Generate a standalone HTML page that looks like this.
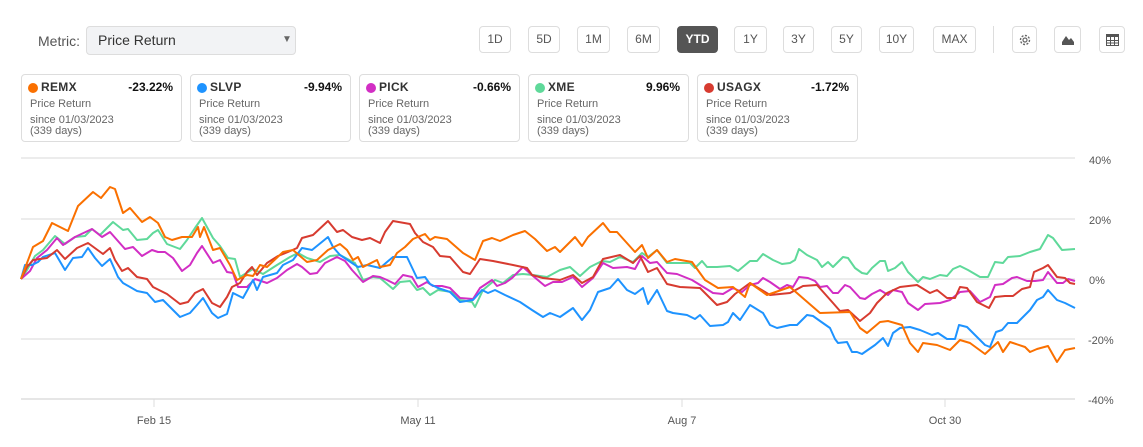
<!DOCTYPE html>
<html><head><meta charset="utf-8"><style>
body{margin:0;width:1143px;height:447px;background:#fff;font-family:"Liberation Sans",Arial,sans-serif;position:relative;overflow:hidden}
.a{position:absolute}
.btn{position:absolute;top:26px;height:25px;border:1px solid #ddd;border-radius:4px;font-size:12px;color:#555;text-align:center;line-height:25px;box-sizing:content-box;background:#fff}
.card{position:absolute;top:74px;width:159px;height:66px;border:1px solid #ddd;border-radius:4px}
.card .dot{position:absolute;left:6px;top:8px;width:10px;height:10px;border-radius:50%}
.card .n{position:absolute;left:19px;top:5px;font-size:12px;font-weight:bold;color:#333;letter-spacing:.3px}
.card .v{position:absolute;right:8px;top:5px;font-size:12px;font-weight:bold;color:#111}
.card .s{position:absolute;left:8px;font-size:11px;color:#666;line-height:12px}
</style></head><body>
<div class="a" style="left:38px;top:33px;font-size:14px;color:#555">Metric:</div>
<div class="a" style="left:86px;top:26px;width:208px;height:27px;background:#f2f3f5;border:1px solid #ddd;border-radius:4px"></div>
<div class="a" style="left:98px;top:32px;font-size:14px;color:#333">Price Return</div>
<div class="a" style="left:282px;top:34px;font-size:10px;color:#666">▼</div>

<div class="btn" style="left:479px;width:30px">1D</div>
<div class="btn" style="left:528px;width:30px">5D</div>
<div class="btn" style="left:577px;width:31px">1M</div>
<div class="btn" style="left:627px;width:31px">6M</div>
<div class="btn" style="left:677px;width:39px;background:#555;border-color:#555;color:#fff;font-weight:bold">YTD</div>
<div class="btn" style="left:734px;width:31px">1Y</div>
<div class="btn" style="left:783px;width:29px">3Y</div>
<div class="btn" style="left:831px;width:29px">5Y</div>
<div class="btn" style="left:879px;width:33px">10Y</div>
<div class="btn" style="left:933px;width:41px">MAX</div>
<div class="a" style="left:993px;top:26px;width:1px;height:27px;background:#ddd"></div>
<div class="btn" style="left:1012px;width:23px"><svg width="14" height="14" viewBox="0 0 14 14" style="margin-top:6px"><circle cx="7" cy="7" r="4.5" fill="none" stroke="#666" stroke-width="1.4" stroke-dasharray="2 1.5"/><circle cx="7" cy="7" r="2" fill="none" stroke="#666" stroke-width="1.2"/></svg></div>
<div class="btn" style="left:1054px;width:25px"><svg width="14" height="12" viewBox="0 0 14 12" style="margin-top:7px"><path d="M1 11 L1 8 L5 2 L8 6 L10 4 L13 8 L13 11Z" fill="#555"/></svg></div>
<div class="btn" style="left:1099px;width:24px"><svg width="13" height="12" viewBox="0 0 13 12" style="margin-top:7px"><rect x="0.5" y="0.5" width="12" height="11" fill="none" stroke="#555"/><rect x="0" y="0" width="13" height="3" fill="#555"/><path d="M4.5 3V12M8.5 3V12M0 6.5H13M0 9H13" stroke="#555" stroke-width="1"/></svg></div>

<div class="card" style="left:21px"><div class="dot" style="background:#fa7000"></div><div class="n">REMX</div><div class="v">-23.22%</div><div class="s" style="top:23px">Price Return</div><div class="s" style="top:39px">since 01/03/2023</div><div class="s" style="top:50px">(339 days)</div></div>
<div class="card" style="left:190px"><div class="dot" style="background:#1e93ff"></div><div class="n">SLVP</div><div class="v">-9.94%</div><div class="s" style="top:23px">Price Return</div><div class="s" style="top:39px">since 01/03/2023</div><div class="s" style="top:50px">(339 days)</div></div>
<div class="card" style="left:359px"><div class="dot" style="background:#d22ec4"></div><div class="n">PICK</div><div class="v">-0.66%</div><div class="s" style="top:23px">Price Return</div><div class="s" style="top:39px">since 01/03/2023</div><div class="s" style="top:50px">(339 days)</div></div>
<div class="card" style="left:528px"><div class="dot" style="background:#5fd99a"></div><div class="n">XME</div><div class="v">9.96%</div><div class="s" style="top:23px">Price Return</div><div class="s" style="top:39px">since 01/03/2023</div><div class="s" style="top:50px">(339 days)</div></div>
<div class="card" style="left:697px"><div class="dot" style="background:#d73b30"></div><div class="n">USAGX</div><div class="v">-1.72%</div><div class="s" style="top:23px">Price Return</div><div class="s" style="top:39px">since 01/03/2023</div><div class="s" style="top:50px">(339 days)</div></div>

<svg class="a" style="left:0;top:0" width="1143" height="447">
<g stroke="#e6e6e6" stroke-width="1.5"><line x1="21" x2="1075" y1="158" y2="158"/><line x1="21" x2="1075" y1="219" y2="219"/><line x1="21" x2="1075" y1="279" y2="279"/><line x1="21" x2="1075" y1="339" y2="339"/></g>
<line x1="21" x2="1075" y1="399" y2="399" stroke="#ddd" stroke-width="1.5"/>
<g stroke="#ddd"><line x1="154" x2="154" y1="399" y2="407"/><line x1="418" x2="418" y1="399" y2="407"/><line x1="682" x2="682" y1="399" y2="407"/><line x1="945" x2="945" y1="399" y2="407"/></g>
<g font-size="11" fill="#555" font-family="Liberation Sans,Arial,sans-serif"><text x="1089" y="164">40%</text><text x="1089" y="224">20%</text><text x="1089" y="284">0%</text><text x="1088" y="344">-20%</text><text x="1088" y="404">-40%</text>
<text x="154" y="424" text-anchor="middle">Feb 15</text><text x="418" y="424" text-anchor="middle">May 11</text><text x="682" y="424" text-anchor="middle">Aug 7</text><text x="945" y="424" text-anchor="middle">Oct 30</text></g>
<g fill="none" stroke-width="2" stroke-linejoin="round">
<polyline stroke="#5fd99a" points="21,279 27,270 35,256 43,250 55,236 65,244 75,237 85,236 92,229 100,235 113,222 123,230 128,229 137,240 147,239 153,233 158,230 167,244 180,249 187,240 195,228 202,218 213,238 220,246 228,258 235,259 240,277 253,269 263,274 277,265 290,257 298,253 307,258 320,262 330,256 340,255 355,263 363,280 373,277 380,278 393,289 400,282 410,281 417,290 423,288 430,295 438,290 452,292 460,300 472,302 475,307 483,290 495,280 503,283 513,275 523,274 533,275 547,277 560,270 570,267 580,276 590,267 602,261 610,262 620,257 633,262 642,253 648,257 657,250 667,263 690,263 695,268 702,261 707,267 717,267 730,266 738,271 750,261 757,261 763,254 773,260 782,264 790,263 795,260 799,249 807,255 817,260 822,267 828,262 833,267 843,257 848,258 855,268 862,273 867,274 872,268 880,261 885,261 888,271 895,268 902,262 908,272 918,282 923,277 930,279 940,275 947,276 953,269 960,266 968,270 980,277 988,277 995,262 1003,263 1008,257 1020,256 1030,252 1040,249 1048,235 1053,238 1062,250 1075,249"/>
<polyline stroke="#d22ec4" points="21,279 30,271 37,258 47,250 57,238 63,245 75,237 92,229 102,237 110,232 125,249 133,247 142,256 152,250 158,252 165,252 173,258 182,271 190,265 197,253 202,246 213,263 220,260 227,272 233,273 238,287 247,287 255,279 267,283 277,278 287,270 297,264 302,267 310,274 317,273 325,263 337,257 345,261 352,270 363,282 373,276 380,277 387,280 395,284 403,275 412,277 418,287 427,282 433,286 442,286 450,288 460,298 473,299 480,288 492,280 497,286 505,283 512,278 523,267 533,276 545,286 553,282 562,282 573,277 582,287 593,278 603,263 613,268 627,267 635,269 642,256 650,263 657,262 667,273 677,274 692,280 705,288 713,293 723,294 733,288 742,292 750,285 758,283 763,278 770,282 780,289 787,285 793,287 799,277 808,278 815,281 820,287 827,286 833,293 838,293 845,285 850,287 860,298 865,299 872,294 880,290 888,295 893,290 902,292 908,303 918,310 925,304 940,303 950,300 960,292 970,291 980,302 990,297 995,285 1003,284 1012,278 1017,277 1027,281 1035,281 1043,280 1048,272 1057,283 1063,283 1068,279 1075,281"/>
<polyline stroke="#1e93ff" points="21,279 25,265 32,265 38,262 43,257 55,253 65,270 73,258 82,257 88,248 95,258 102,266 110,259 118,277 123,283 137,291 147,293 155,302 163,300 180,317 190,313 197,305 203,298 212,313 218,318 227,314 233,293 243,298 253,280 257,290 263,277 277,273 283,265 293,260 302,248 312,250 328,237 333,247 340,255 358,267 367,265 380,268 387,262 393,257 407,257 417,278 425,277 430,284 438,288 450,292 460,302 473,300 482,290 488,293 495,290 505,295 520,302 532,310 543,317 550,313 560,317 573,308 582,320 590,310 598,292 610,288 618,279 627,290 635,294 643,288 648,304 657,290 667,311 673,313 687,315 695,319 700,315 710,326 723,325 728,322 733,313 740,320 750,305 763,313 770,325 777,328 790,325 797,325 807,315 813,316 820,321 830,328 835,339 838,343 847,342 852,352 857,352 862,354 875,345 883,338 888,346 893,333 900,328 910,327 920,330 932,335 938,333 947,339 955,339 959,325 967,327 980,340 985,345 990,347 996,332 1002,330 1008,323 1017,323 1022,318 1030,310 1037,300 1043,297 1048,290 1057,300 1065,303 1075,308"/>
<polyline stroke="#d73b30" points="21,279 27,267 33,260 47,258 57,250 65,259 77,248 88,243 103,254 110,248 115,260 122,271 128,268 137,277 147,279 153,287 167,294 180,304 188,302 195,293 203,289 212,303 220,307 227,297 232,287 240,283 247,272 252,267 257,275 267,263 278,256 288,252 297,248 302,238 313,235 328,221 337,232 343,230 352,237 362,240 370,238 380,243 385,232 393,221 410,224 415,233 423,242 433,247 440,256 450,257 463,272 470,274 480,259 493,261 513,265 527,268 532,275 543,278 560,280 573,275 582,283 593,277 603,259 620,255 633,263 640,256 648,272 657,268 667,284 680,287 700,288 717,305 727,302 735,294 750,283 770,295 790,293 803,286 817,285 833,303 840,311 848,310 860,321 870,313 877,303 887,293 900,287 917,285 930,293 937,290 947,298 955,298 960,287 967,288 977,302 989,308 995,297 1005,296 1013,296 1022,289 1030,287 1034,272 1043,268 1048,265 1057,277 1065,278 1070,283 1075,284"/>
<polyline stroke="#fa7000" points="21,279 33,247 43,241 52,223 68,231 78,206 93,192 101,198 110,187 115,189 123,213 130,208 142,222 150,217 158,223 165,237 172,240 182,237 192,237 198,227 200,237 204,227 213,250 220,248 230,265 237,280 247,275 253,276 260,265 267,267 283,252 293,250 307,262 317,260 328,250 340,244 347,250 353,260 358,257 363,267 377,260 380,267 390,265 397,253 405,247 413,239 425,234 430,240 435,237 447,239 463,253 475,260 483,241 492,238 500,241 513,235 525,231 535,239 547,251 555,247 560,252 575,237 582,246 588,237 603,223 610,232 617,232 635,252 642,245 648,258 657,250 667,262 675,259 692,262 705,280 718,288 733,287 745,297 750,283 767,295 790,287 820,313 850,312 860,328 867,333 880,322 888,321 902,325 910,343 918,352 923,343 937,345 950,350 960,340 970,343 985,354 998,342 1003,352 1010,342 1025,347 1030,352 1037,349 1048,346 1057,362 1065,350 1075,348"/>
</g>
</svg>
</body></html>
